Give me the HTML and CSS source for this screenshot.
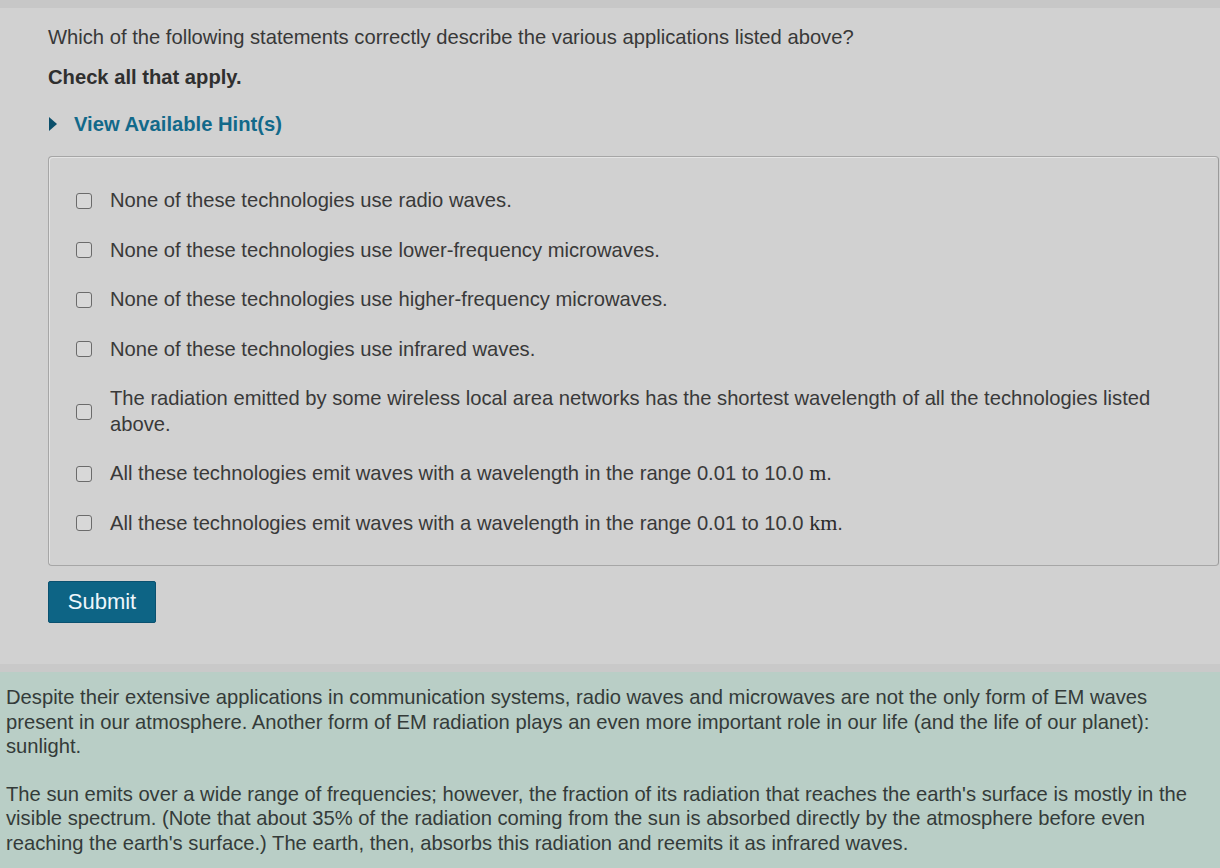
FILE: index.html
```html
<!DOCTYPE html>
<html lang="en">
<head>
<meta charset="utf-8">
<title>Question</title>
<link rel="stylesheet" href="styles.css">
</head>
<body>
<div class="topband"></div>
<section class="question">
  <p class="prompt">Which of the following statements correctly describe the various applications listed above?</p>
  <p class="instr">Check all that apply.</p>
  <div class="hint"><span class="tri"></span><span class="hint-text">View Available Hint(s)</span></div>
  <div class="choices">
    <label class="choice"><span class="cb"></span><span class="lbl">None of these technologies use radio waves.</span></label>
    <label class="choice"><span class="cb"></span><span class="lbl">None of these technologies use lower-frequency microwaves.</span></label>
    <label class="choice"><span class="cb"></span><span class="lbl">None of these technologies use higher-frequency microwaves.</span></label>
    <label class="choice"><span class="cb"></span><span class="lbl">None of these technologies use infrared waves.</span></label>
    <label class="choice"><span class="cb"></span><span class="lbl">The radiation emitted by some wireless local area networks has the shortest wavelength of all the technologies listed above.</span></label>
    <label class="choice"><span class="cb"></span><span class="lbl">All these technologies emit waves with a wavelength in the range 0.01 to 10.0 <span class="math">m</span>.</span></label>
    <label class="choice"><span class="cb"></span><span class="lbl">All these technologies emit waves with a wavelength in the range 0.01 to 10.0 <span class="math">km</span>.</span></label>
  </div>
  <button class="submit" type="button">Submit</button>
</section>
<div class="divider"></div>
<section class="info">
  <p>Despite their extensive applications in communication systems, radio waves and microwaves are not the only form of EM waves present in our atmosphere. Another form of EM radiation plays an even more important role in our life (and the life of our planet): sunlight.</p>
  <p>The sun emits over a wide range of frequencies; however, the fraction of its radiation that reaches the earth's surface is mostly in the visible spectrum. (Note that about 35% of the radiation coming from the sun is absorbed directly by the atmosphere before even reaching the earth's surface.) The earth, then, absorbs this radiation and reemits it as infrared waves.</p>
</section>
</body>
</html>
```

FILE: styles.css
```css
html, body {
  margin: 0;
  padding: 0;
}
body {
  background: #d1d1d1;
  font-family: "Liberation Sans", Arial, sans-serif;
  font-size: 20.2px;
  color: #383838;
  width: 1220px;
  height: 868px;
  overflow: hidden;
}
.topband {
  height: 8px;
  background: #c7c7c7;
}
.question {
  padding: 17px 0 0 48px;
  height: 656px;
  box-sizing: border-box;
}
.question p {
  margin: 0;
  line-height: 24px;
}
.prompt {
  margin-bottom: 16px !important;
}
.instr {
  font-weight: bold;
  color: #2f2f2f;
}
.hint {
  display: flex;
  align-items: center;
  margin-top: 23px;
  height: 24px;
}
.tri {
  width: 0;
  height: 0;
  border-top: 7px solid transparent;
  border-bottom: 7px solid transparent;
  border-left: 8px solid #0b4f6b;
  margin-left: 1px;
  margin-right: 17px;
}
.hint-text {
  color: #12698a;
  font-weight: bold;
}
.choices {
  margin-top: 20px;
  margin-right: 1px;
  border: 1px solid #a6a6a6;
  border-right-color: #9a9a9a;
  box-shadow: inset 1px 1px 0 #e4e4e4;
  border-radius: 4px;
  padding: 31px 40px 29px 27px;
  display: flex;
  flex-direction: column;
  gap: 24px;
}
.choice {
  display: flex;
  align-items: center;
  line-height: 25.5px;
}
.cb {
  flex: none;
  width: 14px;
  height: 14px;
  border: 1.5px solid #6b6b6b;
  border-radius: 3px;
  background: #d8d8d8;
  margin-right: 18px;
}
.lbl {
  color: #393939;
}
.math {
  font-family: "Liberation Serif", "Times New Roman", serif;
  font-size: 22px;
  line-height: 0;
  color: #2a2a2a;
}
.submit {
  margin-top: 15px;
  width: 108px;
  height: 42px;
  background: #0d6485;
  border: 1px solid #0a5170;
  border-radius: 2px;
  color: #eef6fb;
  font-family: "Liberation Sans", Arial, sans-serif;
  font-size: 22px;
  padding: 0;
}
.divider {
  height: 8px;
  background: #c9c9c9;
}
.info {
  background: #b9cec6;
  padding: 13px 10px 0 6px;
  height: 196px;
  box-sizing: border-box;
  font-size: 20.2px;
}
.info p {
  margin: 0 0 23px;
  line-height: 24.5px;
  color: #343b39;
}
```
